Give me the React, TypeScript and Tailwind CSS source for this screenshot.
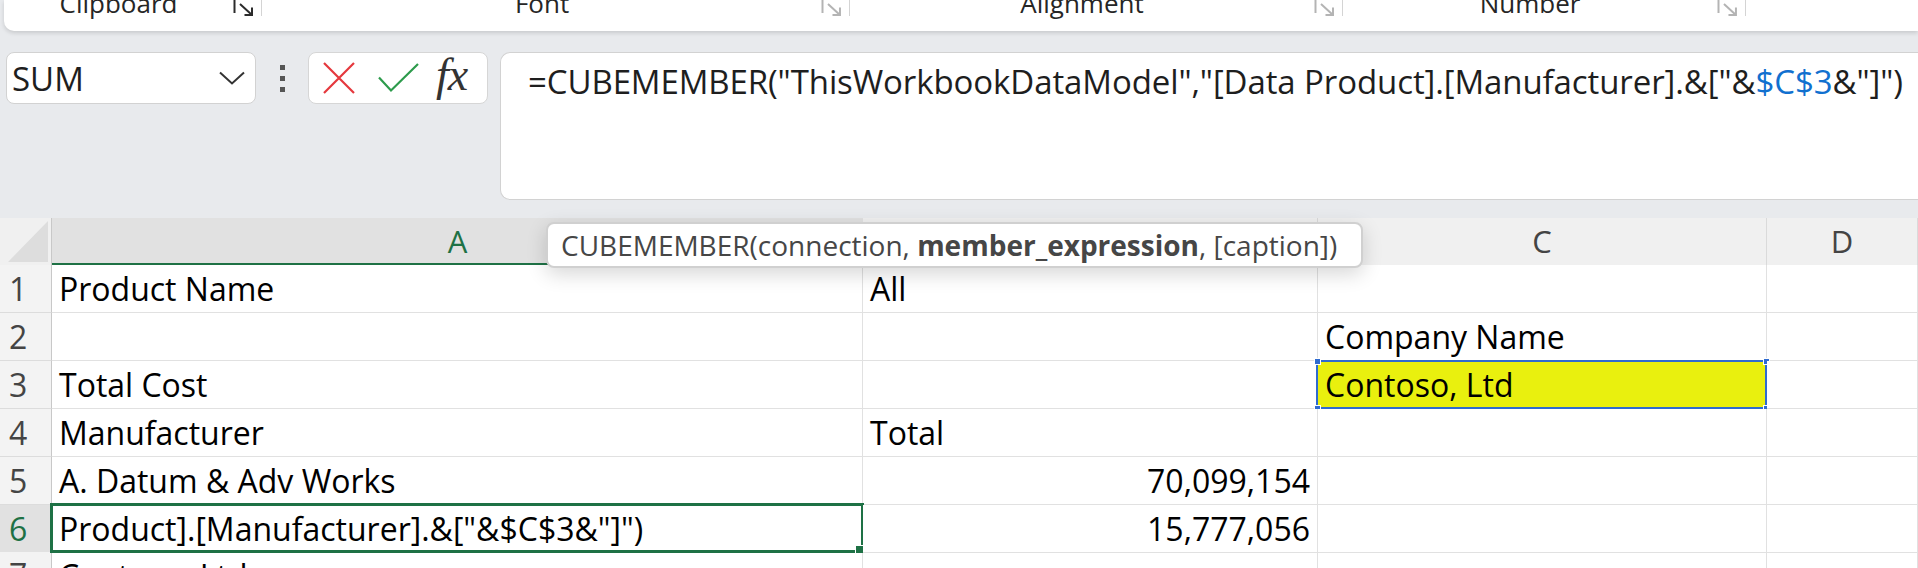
import React from 'react';

const uiFont = "font-['Open_Sans','Noto_Sans',sans-serif]";

const Launcher = ({ dark }: { dark?: boolean }) => (
  <svg width="22" height="18" viewBox="0 0 22 18" className={dark ? 'text-[#2b2b2b]' : 'text-[#b4b4b4]'}>
    <path d="M1.5 0V13" stroke="currentColor" strokeWidth="2" fill="none" />
    <path d="M7 4L19 15M19 7.5V15H11.5" stroke="currentColor" strokeWidth="2" fill="none" />
  </svg>
);

const RibbonGroup = ({ label, width, labelWidth, dark }: { label: string; width: string; labelWidth: string; dark?: boolean }) => (
  <div className={`flex items-start shrink-0 ${width}`}>
    <div className={`${labelWidth} text-center text-[26px] leading-[26px] -mt-[10px] text-[#262626] whitespace-nowrap`}>{label}</div>
    <Launcher dark={dark} />
    <div className="ml-[6px] w-px h-[16px] bg-[#d4d4d4]" />
  </div>
);

type Cell = { text?: string; right?: boolean };

const rows: Cell[][] = [
  [{ text: 'Product Name' }, { text: 'All' }, {}, {}],
  [{}, {}, { text: 'Company Name' }, {}],
  [{ text: 'Total Cost' }, {}, { text: 'Contoso, Ltd' }, {}],
  [{ text: 'Manufacturer' }, { text: 'Total' }, {}, {}],
  [{ text: 'A. Datum & Adv Works' }, { text: '70,099,154', right: true }, {}, {}],
  [{ text: 'Product].[Manufacturer].&["&$C$3&"]")' }, { text: '15,777,056', right: true }, {}, {}],
  [{ text: 'Contoso, Ltd' }, {}, {}, {}],
];

const cols = ['A', 'B', 'C', 'D'];

export default function App() {
  return (
    <div className={`relative w-[1918px] h-[568px] overflow-hidden bg-[#e8eaed] ${uiFont}`}>
      {/* ribbon group labels */}
      <div className="ml-[4px] h-[31px] bg-white rounded-bl-[10px] shadow-[0_2px_4px_rgba(0,0,0,0.14)] flex overflow-hidden">
        <RibbonGroup label="Clipboard" width="w-[259px]" labelWidth="w-[229px]" dark />
        <RibbonGroup label="Font" width="w-[587px]" labelWidth="w-[559px]" />
        <RibbonGroup label="Alignment" width="w-[493px]" labelWidth="w-[464px]" />
        <RibbonGroup label="Number" width="w-[403px]" labelWidth="w-[375px]" />
      </div>

      {/* formula bar */}
      <div className="flex items-start mt-[21px] h-[148px]">
        <div className="ml-[6px] w-[250px] h-[52px] bg-white border border-[#d2d2d2] rounded-[8px] flex items-center pl-[5px] pr-[10px]">
          <span className="flex-1 text-[33px] leading-none text-[#1e1e1e] mt-[1px]">SUM</span>
          <svg width="26" height="14" viewBox="0 0 26 14">
            <path d="M1 1.5L13 12.5L25 1.5" stroke="#333" strokeWidth="2" fill="none" />
          </svg>
        </div>
        <div className="w-[52px] h-[52px] flex flex-col items-center justify-center gap-[6px]">
          <div className="w-[5px] h-[5px] bg-[#555]" />
          <div className="w-[5px] h-[5px] bg-[#555]" />
          <div className="w-[5px] h-[5px] bg-[#555]" />
        </div>
        <div className="w-[180px] h-[52px] bg-white border border-[#d6d6d6] rounded-[8px] flex items-center pl-[13px]">
          <svg width="34" height="34" viewBox="0 0 34 34">
            <path d="M2 2L32 32M32 2L2 32" stroke="#e5383d" strokeWidth="2.2" fill="none" />
          </svg>
          <svg width="42" height="30" viewBox="0 0 42 30" className="ml-[22px] -mt-[1px]">
            <path d="M1 14.5L13 27.5L40 1" stroke="#2d9b4c" strokeWidth="2.2" fill="none" />
          </svg>
          <span className="ml-[16px] -mt-[6px] font-['Liberation_Serif',serif] italic text-[46px] leading-none text-[#333] tracking-[-1px]">fx</span>
        </div>
        <div className="ml-[12px] flex-1 h-[148px] bg-white border border-[#d2d2d2] rounded-l-[10px] border-r-0 pl-[27px] pt-[7px]">
          <div className="text-[33px] leading-[44px] text-[#1e1e1e] whitespace-nowrap tracking-[-0.1px]">
            =CUBEMEMBER("ThisWorkbookDataModel","[Data Product].[Manufacturer].&["&amp;
            <span className="text-[#1170cf]">$C$3</span>&amp;"]")
          </div>
        </div>
      </div>

      {/* grid */}
      <div className="mt-[18px] relative">
        <div className="grid grid-cols-[52px_811px_455px_449px_151px] h-[47px]">
          <div className="bg-[#f0f0f0] border-r border-[#c8c8c8] border-b border-b-[#c6c6c6] flex items-end justify-end pr-[3px] pb-[3px]">
            <svg width="40" height="41" viewBox="0 0 40 41">
              <path d="M40 0V41H0Z" fill="#dddddd" />
            </svg>
          </div>
          {cols.map((c) => (
            <div
              key={c}
              className={
                c === 'A'
                  ? 'bg-[#e1e1e1] border-b-[3px] border-[#1e7145] text-[#1e7145] text-center text-[31px] leading-[44px] pt-[1px]'
                  : 'bg-[#f0f0f0] border-b border-r border-b-[#c6c6c6] border-r-[#dadada] text-[#444] text-center text-[31px] leading-[44px] pt-[1px]'
              }
            >
              {c}
            </div>
          ))}
        </div>

        {rows.map((r, i) => {
          const n = i + 1;
          const sel = n === 6;
          const last = n === 7;
          return (
            <div key={n} className="grid grid-cols-[52px_811px_455px_449px_151px] h-[48px]">
              <div
                className={`border-r border-[#c8c8c8] border-b border-b-[#dcdcdc] text-[32px] leading-[46px] pl-[9px] ${last ? '-mt-[1px]' : 'pt-[1px]'} ${
                  sel ? 'bg-[#e1e1e1] text-[#1e7145]' : 'bg-[#f3f3f3] text-[#444]'
                }`}
              >
                {n}
              </div>
              {r.map((c, j) => {
                const active = n === 6 && j === 0;
                const ref = n === 3 && j === 2;
                return (
                  <div
                    key={j}
                    className={`relative border-r border-b border-[#e1e1e1] text-[32px] leading-[46px] px-[7px] text-black whitespace-nowrap ${
                      last ? 'pt-0' : 'pt-[1px]'
                    } ${c.right ? 'text-right' : ''} ${ref ? 'bg-[#e9f00e]' : 'bg-white'}`}
                  >
                    {c.text}
                    {active && (
                      <>
                        <div className="absolute -left-[2px] -top-[2px] -right-[2px] -bottom-[1px] border-[3px] border-[#1e7145] pointer-events-none" />
                        <div className="absolute -right-[4px] -bottom-[4px] w-[11px] h-[11px] bg-[#1e7145] border-[1.5px] border-white" />
                      </>
                    )}
                    {ref && (
                      <>
                        <div className="absolute -left-[2px] -top-[1px] -right-[1px] -bottom-[1px] border-[2px] border-[#2f6bd0] pointer-events-none" />
                        <div className="absolute -left-[4px] -top-[3px] w-[7px] h-[7px] bg-[#2f6bd0] border border-white" />
                        <div className="absolute -right-[4px] -top-[3px] w-[7px] h-[7px] bg-[#2f6bd0] border border-white" />
                        <div className="absolute -left-[4px] -bottom-[4px] w-[7px] h-[7px] bg-[#2f6bd0] border border-white" />
                        <div className="absolute -right-[4px] -bottom-[4px] w-[7px] h-[7px] bg-[#2f6bd0] border border-white" />
                      </>
                    )}
                  </div>
                );
              })}
            </div>
          );
        })}

        {/* function tooltip */}
        <div className="absolute left-[546px] top-[4px] w-[817px] h-[46px] bg-white border-2 border-[#d0d0d0] rounded-[8px] shadow-[0_6px_20px_rgba(0,0,0,0.16)] flex items-center pl-[13px] text-[28px] text-[#464646] whitespace-nowrap">
          CUBEMEMBER(connection,&nbsp;<b className="font-bold">member_expression</b>, [caption])
        </div>
      </div>
    </div>
  );
}
